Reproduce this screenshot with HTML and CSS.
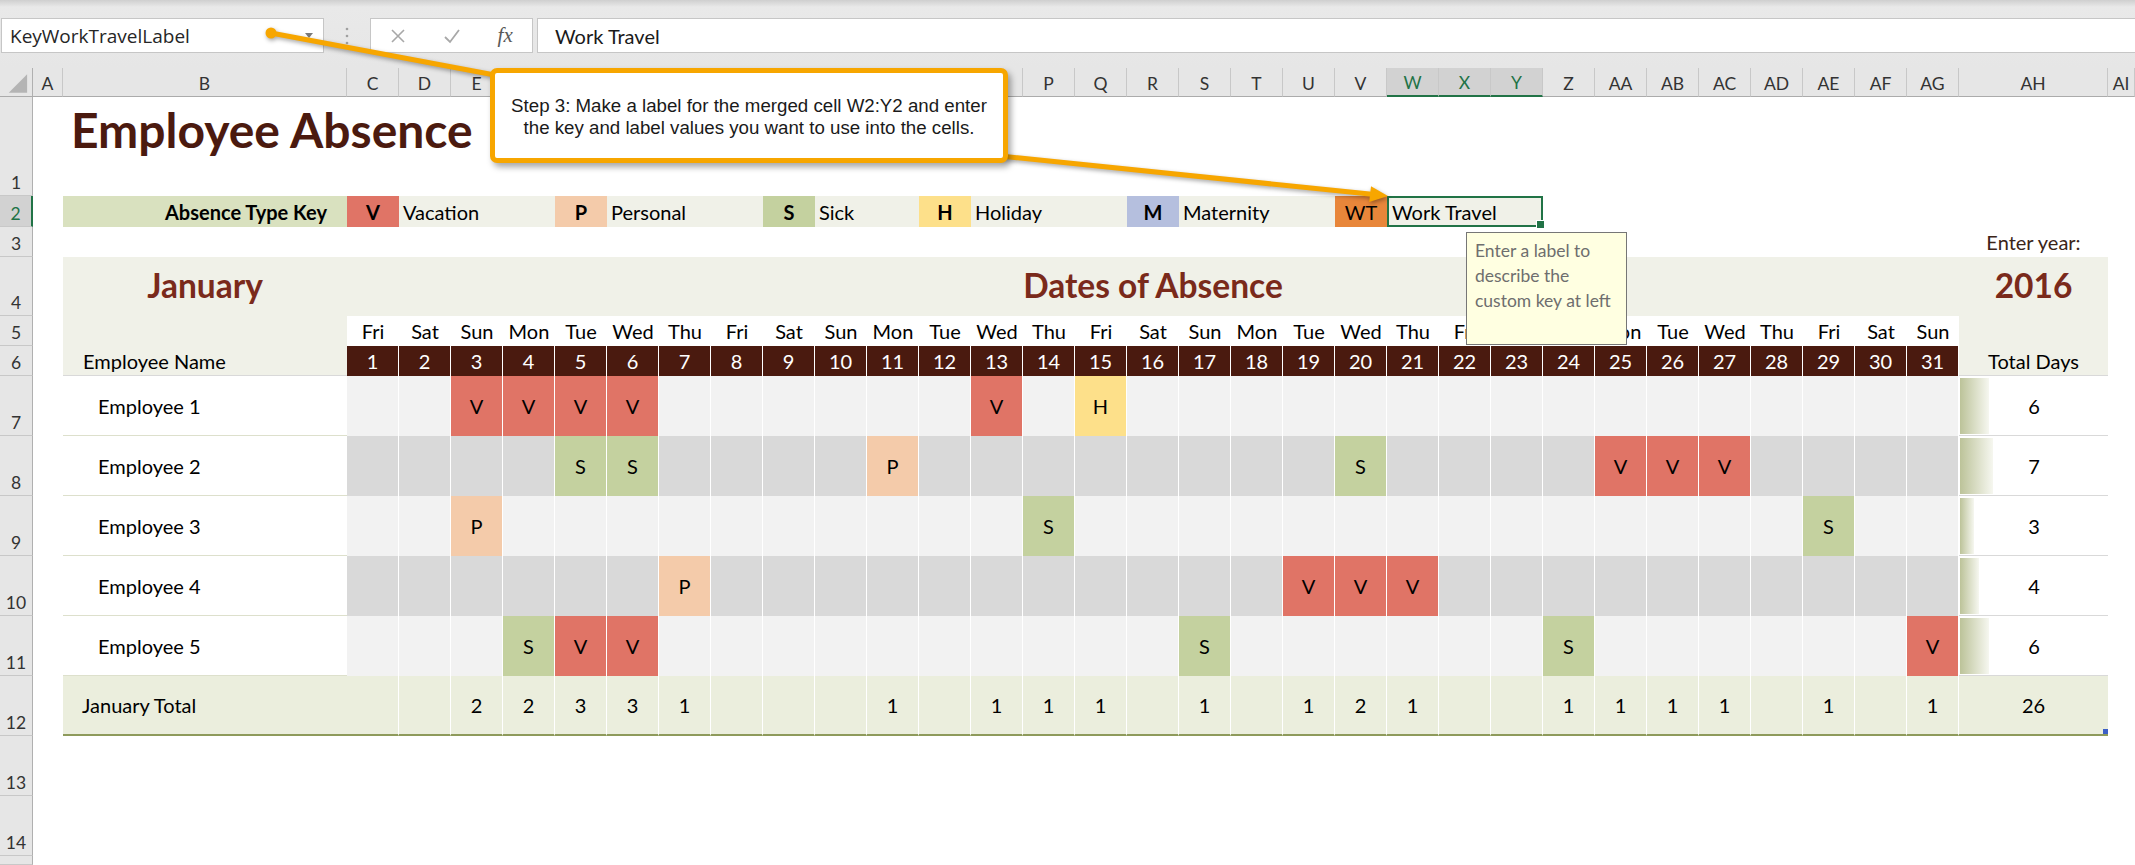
FILE: index.html
```html
<!DOCTYPE html>
<html lang="en">
<head>
    <meta charset="UTF-8">
    <title>Employee Absence</title>
    <link rel="stylesheet" href="styles.css">
</head>
<body>

<div class="formula-bar">
    <div class="name-box">
        <span>KeyWorkTravelLabel</span>
        <svg class="caret" width="8" height="5" viewBox="0 0 8 5"><polygon points="0,0 8,0 4,5" fill="#7a7a7a"/></svg>
    </div>
    <div class="bar-dots">
        <svg width="4" height="20" viewBox="0 0 4 20"><circle cx="2" cy="3" r="1.3" fill="#a0a0a0"/><circle cx="2" cy="10" r="1.3" fill="#a0a0a0"/><circle cx="2" cy="17" r="1.3" fill="#a0a0a0"/></svg>
    </div>
    <div class="fx-box">
        <span><svg width="16" height="16" viewBox="0 0 16 16"><path d="M2 2 L14 14 M14 2 L2 14" stroke="#a8a8a8" stroke-width="1.6" fill="none"/></svg></span>
        <span><svg width="18" height="16" viewBox="0 0 18 16"><path d="M2 9 L7 14 L16 2" stroke="#a8a8a8" stroke-width="1.8" fill="none"/></svg></span>
        <span class="fx">fx</span>
    </div>
    <div class="formula-input">Work Travel</div>
</div>

<div class="sheet" id="sheet"></div>

<svg class="arrows" width="2135" height="865" viewBox="0 0 2135 865">
    <line x1="271" y1="33" x2="500" y2="76" stroke="#f7a600" stroke-width="5"/>
    <circle cx="271" cy="33" r="5.5" fill="#f7a600"/>
    <line x1="1000" y1="156" x2="1372" y2="194.3" stroke="#f7a600" stroke-width="5"/>
    <polygon points="1388,196 1371,186.2 1369.2,202.1" fill="#f7a600"/>
</svg>

<div class="callout">
    <p>Step 3: Make a label for the merged cell W2:Y2 and enter<br>the key and label values you want to use into the cells.</p>
</div>

<div class="input-msg">Enter a label to<br>describe the<br>custom key at left</div>

<script>
    const sheet = document.getElementById('sheet');

    const letters = [];
    for (let i = 0; i < 35; i++) {
        letters.push(i < 26 ? String.fromCharCode(65 + i) : 'A' + String.fromCharCode(39 + i));
    }

    const dayNames = ['Fri', 'Sat', 'Sun', 'Mon', 'Tue', 'Wed', 'Thu'];

    const keys = [
        ['V', 'Vacation', 3, 'k-v'],
        ['P', 'Personal', 3, 'k-p'],
        ['S', 'Sick', 2, 'k-s'],
        ['H', 'Holiday', 3, 'k-h'],
        ['M', 'Maternity', 3, 'k-m'],
        ['WT', 'Work Travel', 3, 'k-wt']
    ];

    const employees = [
        { name: 'Employee 1', marks: { 3: 'V', 4: 'V', 5: 'V', 6: 'V', 13: 'V', 15: 'H' } },
        { name: 'Employee 2', marks: { 5: 'S', 6: 'S', 11: 'P', 20: 'S', 25: 'V', 26: 'V', 27: 'V' } },
        { name: 'Employee 3', marks: { 3: 'P', 14: 'S', 29: 'S' } },
        { name: 'Employee 4', marks: { 7: 'P', 19: 'V', 20: 'V', 21: 'V' } },
        { name: 'Employee 5', marks: { 4: 'S', 5: 'V', 6: 'V', 17: 'S', 24: 'S', 31: 'V' } }
    ];

    // row header + empty column A
    function rowStart(n, sel) {
        return `<div class="c row-hdr${sel ? ' sel' : ''}">${n}</div><div class="c"></div>`;
    }

    let html = '<div class="c corner"><svg width="33" height="29" viewBox="0 0 33 29"><polygon points="28,6 28,25 9,25" fill="#b4b4b4"/></svg></div>';
    letters.forEach(l => {
        const sel = ['W', 'X', 'Y'].includes(l) ? ' sel' : '';
        html += `<div class="c col-hdr${sel}">${l}</div>`;
    });

    // 1: title
    html += rowStart(1) + '<div class="c title span-34">Employee Absence</div>';

    // 2: key
    html += rowStart(2, true) + '<div class="c key-title">Absence Type Key</div>';
    keys.forEach(k => {
        const sel = k[0] === 'WT' ? ' selected' : '';
        html += `<div class="c key ${k[3]}">${k[0]}</div><div class="c key-label span-${k[2]}${sel}">${k[1]}</div>`;
    });
    html += '<div class="c span-10"></div>';

    // 3: year label
    html += rowStart(3) + '<div class="c span-32"></div><div class="c enter-year">Enter year:</div><div class="c"></div>';

    // 4: headings
    html += rowStart(4) + '<div class="c band big">January</div><div class="c band big span-31">Dates of Absence</div><div class="c band big">2016</div><div class="c"></div>';

    // 5: day names
    html += rowStart(5) + '<div class="c band"></div>';
    for (let d = 1; d <= 31; d++) {
        html += `<div class="c dname">${dayNames[(d - 1) % 7]}</div>`;
    }
    html += '<div class="c band"></div><div class="c"></div>';

    // 6: day numbers
    html += rowStart(6) + '<div class="c band col-label name-label">Employee Name</div>';
    for (let d = 1; d <= 31; d++) {
        html += `<div class="c dnum">${d}</div>`;
    }
    html += '<div class="c band col-label">Total Days</div><div class="c"></div>';

    // 7-11: employees
    const dayTotals = new Array(32).fill(0);
    employees.forEach((emp, i) => {
        const shade = i % 2 === 0 ? 'light' : 'dark';
        let count = 0;
        html += rowStart(7 + i) + `<div class="c emp-name">${emp.name}</div>`;
        for (let d = 1; d <= 31; d++) {
            const m = emp.marks[d];
            if (m) {
                count++;
                dayTotals[d]++;
                html += `<div class="c day m-${m}">${m}</div>`;
            } else {
                html += `<div class="c day ${shade}"></div>`;
            }
        }
        const w = Math.round(count * 4.75);
        html += `<div class="c emp-total"><span class="bar" style="width:${w}px"></span><span class="num">${count}</span></div><div class="c"></div>`;
    });

    // 12: totals
    let grand = 0;
    html += rowStart(12) + '<div class="c tot tot-label">January Total</div>';
    for (let d = 1; d <= 31; d++) {
        grand += dayTotals[d];
        html += `<div class="c tot tot-day">${dayTotals[d] || ''}</div>`;
    }
    html += `<div class="c tot grand">${grand}</div><div class="c"></div>`;

    for (let r = 13; r <= 14; r++) {
        html += rowStart(r) + '<div class="c span-34"></div>';
    }
    html += '<div class="c row-hdr"></div><div class="c span-35"></div>';

    sheet.innerHTML = html;
</script>

</body>
</html>
```

FILE: styles.css
```css
* {
    box-sizing: border-box;
}
body {
    margin: 0;
    width: 2135px;
    height: 865px;
    overflow: hidden;
    position: relative;
    background: #fff;
    font-family: Lato, "Liberation Sans", sans-serif;
    font-size: 20px;
    color: #000;
}

/* formula bar */
.formula-bar {
    height: 68px;
    display: flex;
    align-items: flex-start;
    padding-top: 18px;
    background: linear-gradient(#cfcfcf, #e9e9e9 7px, #e6e6e6);
}
.name-box {
    margin-left: 1px;
    width: 323px;
    height: 35px;
    background: #fff;
    border: 1px solid #c6c6c6;
    display: flex;
    align-items: center;
    justify-content: space-between;
    padding: 0 10px 0 8px;
    font-family: "Open Sans", sans-serif;
    font-size: 19px;
    color: #262626;
}
.bar-dots {
    width: 46px;
    height: 35px;
    display: flex;
    align-items: center;
    justify-content: center;
}
.fx-box {
    width: 163px;
    height: 35px;
    background: #fff;
    border: 1px solid #c6c6c6;
    display: flex;
}
.fx-box span {
    width: 54px;
    display: flex;
    align-items: center;
    justify-content: center;
}
.fx-box .fx {
    font-family: "Liberation Serif", serif;
    font-style: italic;
    font-size: 21px;
    color: #595959;
}
.formula-input {
    margin-left: 4px;
    flex: 1;
    height: 35px;
    background: #fff;
    border: 1px solid #c6c6c6;
    border-right: none;
    padding-left: 17px;
    display: flex;
    align-items: center;
    font-size: 20px;
    color: #1a1a1a;
}

/* sheet grid */
.sheet {
    display: grid;
    grid-template-columns: 33px 30px 284px repeat(31, 52px) 149px 27px;
    grid-template-rows: 29px 99px 31px 30px 59px 30px 30px repeat(8, 60px) 9px;
}
.c {
    min-width: 0;
    display: flex;
    align-items: center;
    justify-content: center;
    white-space: nowrap;
    line-height: 1.2;
}
.span-2 { grid-column: span 2; }
.span-3 { grid-column: span 3; }
.span-10 { grid-column: span 10; }
.span-31 { grid-column: span 31; }
.span-32 { grid-column: span 32; }
.span-34 { grid-column: span 34; }
.span-35 { grid-column: span 35; }

.corner {
    background: #e6e6e6;
    border-right: 1px solid #b0b0b0;
    border-bottom: 1px solid #ababab;
}
.col-hdr {
    background: #e6e6e6;
    border-right: 1px solid #c8c8c8;
    border-bottom: 1px solid #ababab;
    font-size: 17.5px;
    color: #333;
    padding-top: 2px;
}
.col-hdr.sel {
    background: #d2d2d2;
    color: #217346;
    border-bottom: 2px solid #217346;
}
.row-hdr {
    background: #e6e6e6;
    border-right: 1px solid #b0b0b0;
    border-bottom: 1px solid #c8c8c8;
    align-items: flex-end;
    font-size: 17.5px;
    line-height: 1;
    color: #333;
    padding-bottom: 4px;
}
.row-hdr.sel {
    background: #d2d2d2;
    color: #217346;
    border-right: 2px solid #217346;
}

.title {
    justify-content: flex-start;
    align-items: flex-start;
    padding: 4px 0 0 8px;
    font-size: 48px;
    font-weight: 700;
    color: #4b1a0f;
}

/* key row */
.key-title {
    background: #d9e1bf;
    justify-content: flex-end;
    padding-right: 20px;
    font-weight: 700;
    font-size: 20px;
}
.key {
    font-weight: 700;
}
.k-v { background: #e07466; }
.k-p { background: #f4cbaa; }
.k-s { background: #c4d19f; }
.k-h { background: #fde08a; }
.k-m { background: #b5bfde; }
.k-wt {
    background: #e8863a;
    font-weight: 400;
}
.key-label {
    background: #f0f1e8;
    justify-content: flex-start;
    padding-left: 4px;
}
.key-label.selected {
    position: relative;
    border: 2px solid #217346;
    padding-left: 3px;
}
.key-label.selected::after {
    content: "";
    position: absolute;
    right: -4px;
    bottom: -4px;
    width: 7px;
    height: 7px;
    background: #217346;
    border: 1px solid #fff;
}

.enter-year {
    color: #3b2418;
}

/* heading band */
.band {
    background: #f0f1e8;
}
.big {
    align-items: flex-end;
    padding-bottom: 11px;
    font-size: 33.5px;
    font-weight: 700;
    color: #7a2a1b;
}
.dnum {
    background: #4a1a0f;
    color: #fff;
    border-right: 1px solid #fff;
}
.col-label {
    border-bottom: 1px solid #d9d9d9;
}
.name-label {
    justify-content: flex-start;
    padding-left: 20px;
}

/* employee rows */
.emp-name {
    justify-content: flex-start;
    padding-left: 35px;
    border-bottom: 1px solid #dde0cc;
}
.day {
    border-right: 1px solid #fff;
}
.day.light { background: #f2f2f2; }
.day.dark { background: #d9d9d9; }
.m-V { background: #e07466; }
.m-P { background: #f4cbaa; }
.m-S { background: #c4d19f; }
.m-H { background: #fde08a; }
.emp-total {
    display: grid;
    grid-template-columns: 100%;
    grid-template-rows: 100%;
    justify-content: stretch;
    align-content: stretch;
    padding: 2px 0 1px 1px;
    border-bottom: 1px solid #d9d9d9;
}
.emp-total .bar {
    grid-area: 1 / 1;
    justify-self: start;
    height: 100%;
    background: linear-gradient(to right, #bcc399, #f6f7f0);
}
.emp-total .num {
    grid-area: 1 / 1;
    place-self: center;
}

/* totals */
.tot {
    background: #ebeedd;
    border-bottom: 2px solid #8e9a5b;
}
.tot-label {
    justify-content: flex-start;
    padding-left: 19px;
}
.tot-day {
    border-right: 1px solid #fff;
}
.grand {
    position: relative;
}
.grand::after {
    content: "";
    position: absolute;
    right: 0;
    bottom: 0;
    width: 5px;
    height: 5px;
    background: #3c5fc7;
}

/* overlays */
.arrows {
    position: absolute;
    left: 0;
    top: 0;
    pointer-events: none;
    filter: drop-shadow(1px 2px 2px rgba(0, 0, 0, 0.35));
}
.callout {
    position: absolute;
    left: 490px;
    top: 68px;
    width: 518px;
    height: 95px;
    background: #fff;
    border: 5px solid #f7a600;
    border-radius: 7px;
    box-shadow: 3px 4px 6px rgba(0, 0, 0, 0.35);
    display: flex;
    align-items: center;
    justify-content: center;
    padding-top: 3px;
    font-family: "Liberation Sans", Arial, sans-serif;
    font-size: 18.7px;
    line-height: 22px;
    color: #1a1a1a;
    text-align: center;
}
.callout p {
    margin: 0;
}
.input-msg {
    position: absolute;
    left: 1466px;
    top: 232px;
    width: 161px;
    height: 113px;
    background: #ffffe1;
    border: 1px solid #767676;
    padding: 5px 0 0 8px;
    font-size: 17.5px;
    line-height: 25px;
    color: #6e6e6e;
}
```
